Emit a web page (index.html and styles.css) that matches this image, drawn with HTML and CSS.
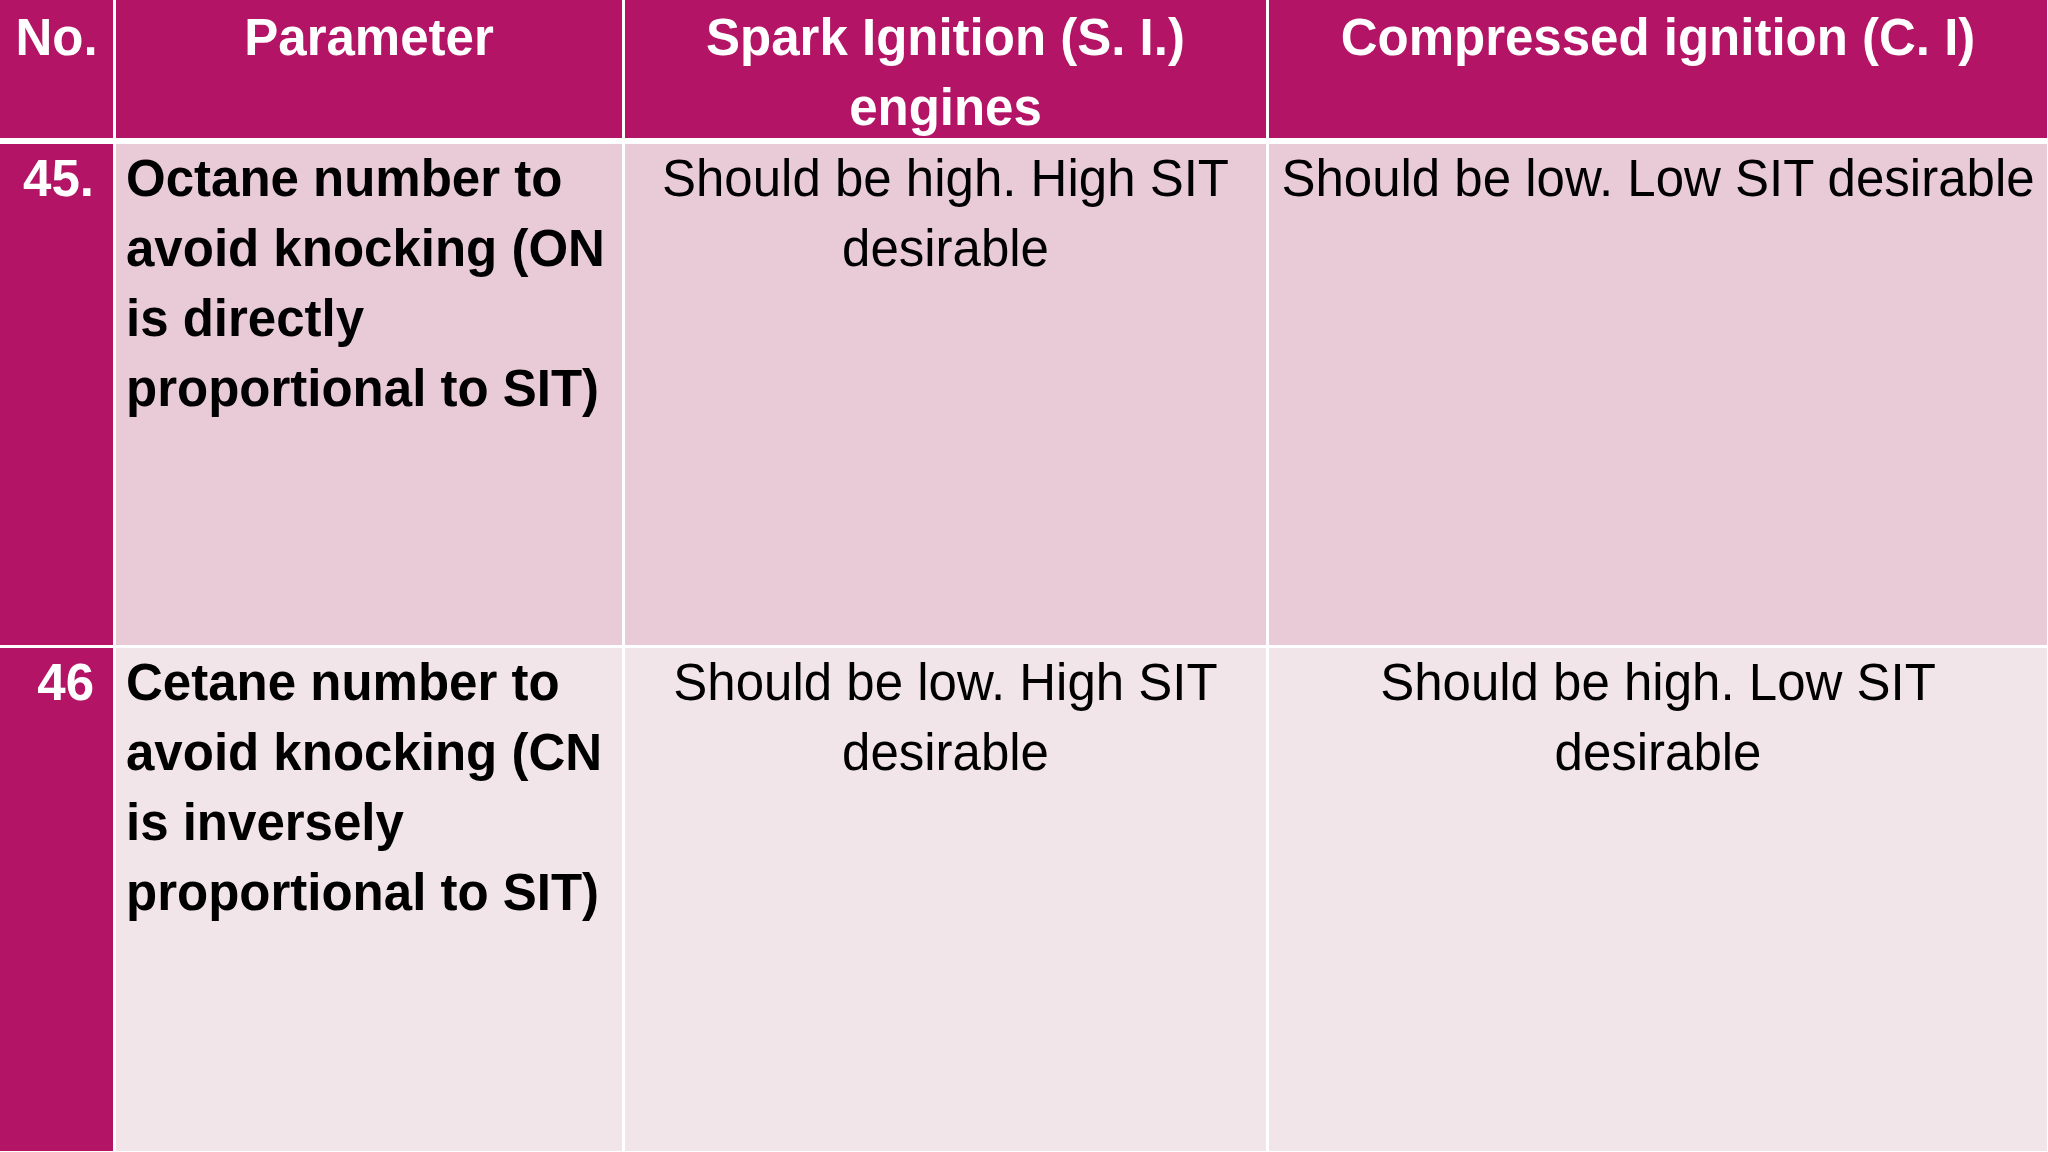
FILE: index.html
```html
<!DOCTYPE html>
<html>
<head>
<meta charset="utf-8">
<link rel="stylesheet" href="styles.css">
</head>
<body>
<div class="table">
  <div class="cell head">No.</div>
  <div class="cell head">Parameter</div>
  <div class="cell head">Spark Ignition (S. I.) engines</div>
  <div class="cell head">Compressed ignition (C. I)</div>

  <div class="cell num">45.</div>
  <div class="cell param odd">Octane number to avoid knocking (ON is directly proportional to SIT)</div>
  <div class="cell val odd">Should be high. High SIT desirable</div>
  <div class="cell val odd">Should be low. Low SIT desirable</div>

  <div class="cell num">46</div>
  <div class="cell param even">Cetane number to avoid knocking (CN is inversely proportional to SIT)</div>
  <div class="cell val even">Should be low. High SIT desirable</div>
  <div class="cell val even">Should be high. Low SIT desirable</div>
</div>
</body>
</html>
```

FILE: styles.css
```css
html, body {
  margin: 0;
  padding: 0;
  background: #ffffff;
}

body {
  width: 2048px;
  height: 1152px;
  overflow: hidden;
  font-family: "Liberation Sans", Arial, sans-serif;
}

.table {
  display: grid;
  grid-template-columns: 113px 506px 641px 778px;
  grid-template-rows: 141px 501px 503px;
  column-gap: 3px;
  row-gap: 3px;
  background: #ffffff;
  width: 2047px;
}

.cell {
  font-size: 51px;
  line-height: 70px;
  box-sizing: border-box;
  padding: 0 4px;
}

.head {
  background: #b41466;
  color: #ffffff;
  font-weight: bold;
  text-align: center;
  padding-top: 3px;
  border-bottom: 3px solid #ffffff;
}

.num {
  background: #b41466;
  color: #ffffff;
  font-weight: bold;
  text-align: right;
  padding: 0 19px 0 0;
}

.param {
  font-weight: bold;
  color: #000000;
  padding: 0 8px 0 10px;
}

.val {
  color: #000000;
  text-align: center;
}

.odd {
  background: #e8cbd6;
}

.even {
  background: #f2e5ea;
}
```
